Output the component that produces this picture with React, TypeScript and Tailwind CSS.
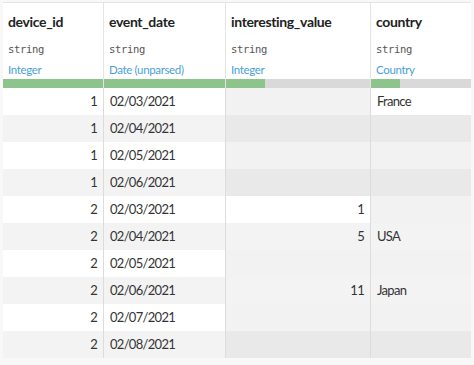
import React from "react";

const cols = [
  { name: "device_id", type: "Integer", w: "w-[101px]", pct: 100 },
  { name: "event_date", type: "Date (unparsed)", w: "w-[122px]", pct: 100 },
  { name: "interesting_value", type: "Integer", w: "w-[145px]", pct: 27 },
  { name: "country", type: "Country", w: "w-[100px]", pct: 29 },
];

const rows: [string, string, string, string][] = [
  ["1", "02/03/2021", "", "France"],
  ["1", "02/04/2021", "", ""],
  ["1", "02/05/2021", "", ""],
  ["1", "02/06/2021", "", ""],
  ["2", "02/03/2021", "1", ""],
  ["2", "02/04/2021", "5", "USA"],
  ["2", "02/05/2021", "", ""],
  ["2", "02/06/2021", "11", "Japan"],
  ["2", "02/07/2021", "", ""],
  ["2", "02/08/2021", "", ""],
];

const font = { fontFamily: "Lato, 'Noto Sans', sans-serif" };

export default function App() {
  return (
    <div className="w-[474px] h-[365px] bg-[#f8f8f8] pl-[3px] pt-[2px] overflow-hidden" style={font}>
      <div className="w-[468px] bg-white">
        <div className="flex border-t border-[#e4e4e4]">
          {cols.map((c, i) => (
            <div key={c.name} className={`${c.w} flex flex-col ${i < 3 ? "border-r border-[#e4e4e4]" : ""}`}>
              <div className="h-[36px] flex items-center px-[5px] text-[14px] tracking-[-0.35px] font-bold text-[#222]">{c.name}</div>
              <div className="h-[22px] flex items-center px-[5px] text-[10.5px] tracking-[-0.3px] text-[#555]" style={{ fontFamily: "'DejaVu Sans Mono', monospace" }}>string</div>
              <div className="h-[18px] flex items-center px-[5px] text-[11.5px] tracking-[-0.35px] text-[#4a9fd6]">{c.type}</div>
              <div className="h-[9px] bg-[#d9d9d9] flex">
                <div className="h-full bg-[#8cc48b]" style={{ width: `${c.pct}%` }} />
              </div>
            </div>
          ))}
        </div>
        {rows.map((r, ri) => {
          const even = ri % 2 === 1;
          return (
            <div key={ri} className={`flex h-[27px] ${even ? "bg-[#f3f3f3]" : "bg-white"}`}>
              {r.map((v, ci) => {
                const empty = v === "";
                const bg = empty ? (even ? "bg-[#e9e9e9]" : "bg-[#f2f2f2]") : "";
                const align = ci === 0 || ci === 2 ? "justify-end" : "justify-start";
                return (
                  <div
                    key={ci}
                    className={`${cols[ci].w} flex items-center ${align} px-[6px] text-[13px] tracking-[-0.7px] text-[#333] ${bg} ${ci < 3 ? "border-r border-[#dcdcdc]" : ""}`}
                  >
                    {v}
                  </div>
                );
              })}
            </div>
          );
        })}
      </div>
    </div>
  );
}
